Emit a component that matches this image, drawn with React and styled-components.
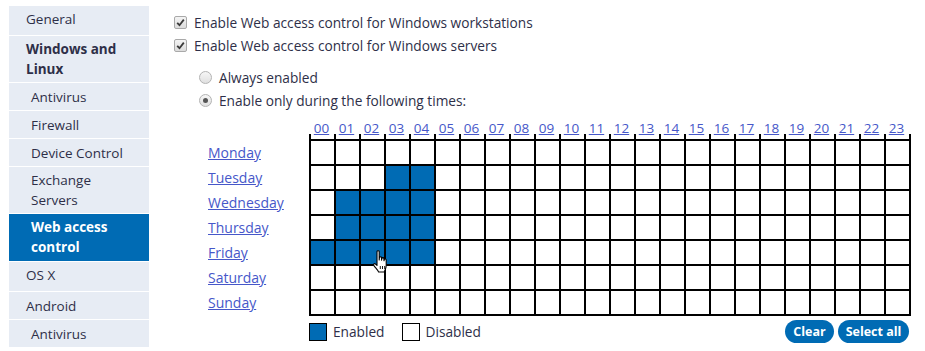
import React from "react";
import styled, { createGlobalStyle } from "styled-components";

const GlobalStyle = createGlobalStyle`
  html, body {
    margin: 0;
    padding: 0;
    background: #ffffff;
  }
  body {
    font-family: "Open Sans", "Liberation Sans", sans-serif;
    color: #2e2f48;
    font-size: 13.7px;
  }
`;

const HOURS = Array.from({ length: 24 }, (_, i) => String(i).padStart(2, "0"));
const DAYS = ["Monday", "Tuesday", "Wednesday", "Thursday", "Friday", "Saturday", "Sunday"];
const ACTIVE = {
  1: [3, 4],
  2: [1, 2, 3, 4],
  3: [1, 2, 3, 4],
  4: [0, 1, 2, 3, 4],
};

const MENU = [
  { label: "General", level: 0, first: true },
  { label: "Windows and Linux", level: 0, bold: true, wrap: true },
  { label: "Antivirus", level: 1 },
  { label: "Firewall", level: 1 },
  { label: "Device Control", level: 1 },
  { label: "Exchange Servers", level: 1, wrap: true },
  { label: "Web access control", level: 1, bold: true, active: true, wrap: true, tall: true },
  { label: "OS X", level: 0, first: true },
  { label: "Android", level: 0 },
  { label: "Antivirus", level: 1 },
];

const Page = styled.div`
  display: flex;
  align-items: flex-start;
  width: 925px;
  height: 351px;
  overflow: hidden;
`;

const Sidebar = styled.nav`
  width: 140px;
  margin: 6px 0 0 9px;
  display: flex;
  flex-direction: column;
  gap: 1px;
  flex-shrink: 0;
`;

const MenuItem = styled.div`
  background: ${(p) => (p.$active ? "#006bb4" : "#e7ecf4")};
  color: ${(p) => (p.$active ? "#ffffff" : "#2e2f48")};
  font-weight: ${(p) => (p.$bold ? 700 : 400)};
  padding: ${(p) =>
    p.$first ? "3px 6px 6px" : p.$tall ? "3px 6px 4px" : p.$wrap ? "3px 6px 3px" : "4px 6px 3px"};
  padding-left: ${(p) => (p.$level ? 22 : 17)}px;
  line-height: 20px;
  font-size: 13.5px;
`;

const Label = styled.span`
  display: block;
  max-width: ${(p) => (p.$wrap ? "100px" : "none")};
`;

const Main = styled.main`
  flex: 1;
  padding: 11px 0 0 25px;
  display: flex;
  flex-direction: column;
`;

const OptionRow = styled.label`
  display: flex;
  align-items: center;
  gap: 7px;
  height: 23px;
  margin-left: ${(p) => p.$indent || 0}px;
`;

const CheckBox = styled.span`
  width: 11px;
  height: 11px;
  border: 1px solid #a9a9a9;
  border-radius: 2px;
  background: linear-gradient(#f4f4f4, #dcdcdc);
  display: flex;
  align-items: center;
  justify-content: center;
  flex-shrink: 0;
`;

const Radio = styled.span`
  width: 11px;
  height: 11px;
  border: 1px solid #b3b3b3;
  border-radius: 50%;
  background: linear-gradient(#f6f6f6, #e0e0e0);
  display: flex;
  align-items: center;
  justify-content: center;
  flex-shrink: 0;
  &::after {
    content: "";
    display: ${(p) => (p.$checked ? "block" : "none")};
    width: 5px;
    height: 5px;
    border-radius: 50%;
    background: #555;
  }
`;

const RadioGroup = styled.div`
  display: flex;
  flex-direction: column;
  margin-top: 9px;
`;

const Schedule = styled.div`
  display: flex;
  margin: 10px 0 0 34px;
`;

const DayColumn = styled.div`
  display: flex;
  flex-direction: column;
  width: 101px;
  padding-top: 18px;
`;

const DayLink = styled.a`
  height: 25px;
  line-height: 25px;
  color: #4657c9;
  text-decoration: underline;
  font-size: 14px;
`;

const GridArea = styled.div`
  display: flex;
  flex-direction: column;
`;

const HourRow = styled.div`
  display: flex;
  height: 17px;
`;

const HourCell = styled.div`
  width: 25px;
  position: relative;
  text-align: center;
  font-size: 13.5px;
  line-height: 13px;
  a {
    color: #4657c9;
    text-decoration: underline;
  }
  &::before {
    content: "";
    position: absolute;
    left: 0;
    bottom: 0;
    width: 2px;
    height: 5px;
    background: #000;
  }
  &:last-child::after {
    content: "";
    position: absolute;
    right: -2px;
    bottom: 0;
    width: 2px;
    height: 5px;
    background: #000;
  }
`;

const Grid = styled.div`
  display: grid;
  grid-template-columns: repeat(24, 23px);
  grid-auto-rows: 23px;
  gap: 2px;
  padding: 2px;
  background: #000;
  width: fit-content;
`;

const Cell = styled.div`
  background: ${(p) => (p.$on ? "#006bb4" : "#ffffff")};
`;

const Footer = styled.div`
  display: flex;
  align-items: center;
  height: 23px;
  margin-top: 4px;
`;

const Legend = styled.div`
  display: flex;
  align-items: center;
  gap: 6px;
  margin-right: 17px;
`;

const Swatch = styled.span`
  width: 16px;
  height: 16px;
  border: 1px solid #000;
  background: ${(p) => p.$color};
`;

const Buttons = styled.div`
  margin-left: auto;
  margin-right: 2px;
  display: flex;
  gap: 4px;
`;

const Button = styled.button`
  height: 23px;
  width: ${(p) => p.$width}px;
  padding: 0;
  border: none;
  border-radius: 12px;
  background: #006bb4;
  color: #fff;
  font-family: "Open Sans", "Liberation Sans", sans-serif;
  font-size: 12.5px;
  font-weight: 700;
`;

const Cursor = styled.svg`
  position: absolute;
  left: 371px;
  top: 249px;
`;

const CheckMark = () => (
  <svg width="9" height="9" viewBox="0 0 9 9">
    <path d="M1.2 4.8 L3.5 7.2 L7.8 1.6" fill="none" stroke="#3a3a3a" strokeWidth="1.8" />
  </svg>
);

export default function App() {
  return (
    <>
      <GlobalStyle />
      <Page>
        <Sidebar>
          {MENU.map((m, i) => (
            <MenuItem
              key={i}
              $level={m.level}
              $bold={m.bold}
              $active={m.active}
              $wrap={m.wrap}
              $first={m.first}
              $tall={m.tall}
            >
              <Label $wrap={m.wrap}>{m.label}</Label>
            </MenuItem>
          ))}
        </Sidebar>
        <Main>
          <OptionRow>
            <CheckBox>
              <CheckMark />
            </CheckBox>
            Enable Web access control for Windows workstations
          </OptionRow>
          <OptionRow>
            <CheckBox>
              <CheckMark />
            </CheckBox>
            Enable Web access control for Windows servers
          </OptionRow>
          <RadioGroup>
            <OptionRow $indent={25}>
              <Radio />
              Always enabled
            </OptionRow>
            <OptionRow $indent={25}>
              <Radio $checked />
              Enable only during the following times:
            </OptionRow>
          </RadioGroup>
          <Schedule>
            <DayColumn>
              {DAYS.map((d) => (
                <DayLink key={d}>{d}</DayLink>
              ))}
            </DayColumn>
            <GridArea>
              <HourRow>
                {HOURS.map((h) => (
                  <HourCell key={h}>
                    <a>{h}</a>
                  </HourCell>
                ))}
              </HourRow>
              <Grid>
                {DAYS.map((d, r) =>
                  HOURS.map((h, c) => (
                    <Cell key={d + h} $on={(ACTIVE[r] || []).includes(c)} />
                  ))
                )}
              </Grid>
              <Footer>
                <Legend>
                  <Swatch $color="#006bb4" />
                  Enabled
                </Legend>
                <Legend>
                  <Swatch $color="#ffffff" />
                  Disabled
                </Legend>
                <Buttons>
                  <Button $width={49}>Clear</Button>
                  <Button $width={71}>Select all</Button>
                </Buttons>
              </Footer>
            </GridArea>
          </Schedule>
        </Main>
      </Page>
      <Cursor width="20" height="26" viewBox="0 0 20 26">
        <path
          d="M6 2.5 C6 1.4 8.2 1.4 8.2 2.5 L8.2 11 L8.4 8.6 C8.4 7.6 10.5 7.6 10.5 8.6 L10.6 11.2 L10.8 9.4 C10.8 8.4 12.9 8.4 12.9 9.4 L13 11.8 L13.2 10.6 C13.3 9.7 15.2 9.8 15.2 10.8 L15.2 16.5 C15.2 19.5 13.6 21.5 13.2 23 L7.6 23 C6.8 21 4.2 18.6 2.8 16.4 C2.1 15.2 3.3 14.2 4.3 14.9 L6 16.4 Z"
          fill="#fff"
          stroke="#000"
          strokeWidth="1.1"
          strokeLinejoin="round"
        />
        <path d="M9.3 17 V20 M11.5 17 V20 M13.7 17 V20" stroke="#000" strokeWidth="0.9" />
      </Cursor>
    </>
  );
}
